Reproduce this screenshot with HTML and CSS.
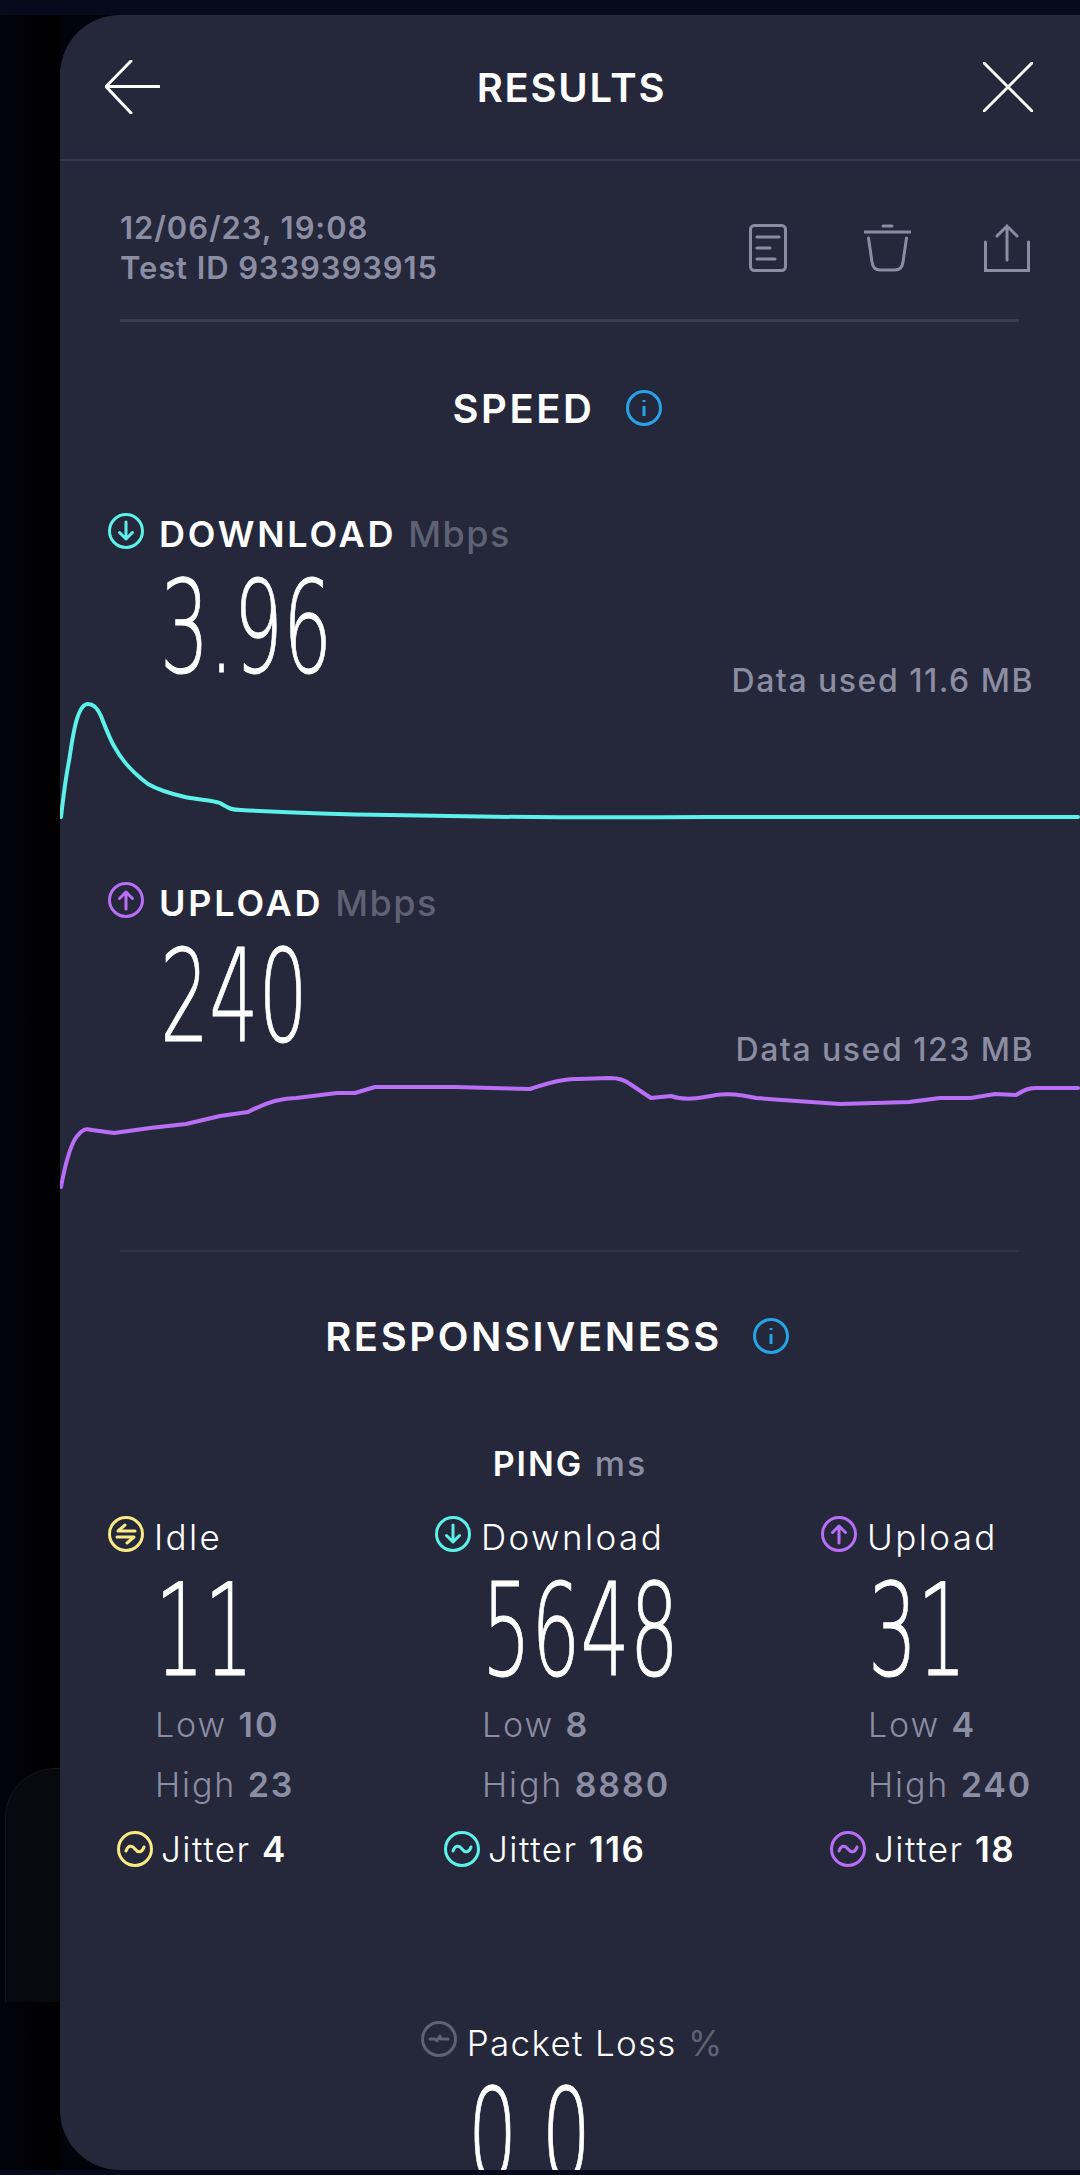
FILE: index.html
```html
<!DOCTYPE html>
<html lang="en">
<head>
    <meta charset="UTF-8">
    <meta name="viewport" content="width=device-width, initial-scale=1.0">
    <title>Results</title>
    <link rel="stylesheet" href="styles.css">
</head>
<body>
    <svg class="defs" width="0" height="0">
        <symbol id="ring-down" viewBox="0 0 36 36"><circle cx="18" cy="18" r="16.5"/><path d="M18 9v17M11.5 19.5 18 26l6.5-6.5"/></symbol>
        <symbol id="ring-up" viewBox="0 0 36 36"><circle cx="18" cy="18" r="16.5"/><path d="M18 27V10M11.5 16.5 18 10l6.5 6.5"/></symbol>
        <symbol id="ring-idle" viewBox="0 0 36 36"><circle cx="18" cy="18" r="16.5"/><path d="M27 15H10l7-6M9 21h17l-7 6"/></symbol>
        <symbol id="ring-jitter" viewBox="0 0 36 36"><circle cx="18" cy="18" r="16.5"/><path d="M9 20c2-6 6-6 9-2s7 4 9-2"/></symbol>
        <symbol id="ring-loss" viewBox="0 0 36 36"><circle cx="18" cy="18" r="16.5"/><path d="M9 18h5l2 2 3-5 1 3M22 18h5"/></symbol>
    </svg>

    <div class="strip"></div>
    <div class="screen">
        <div class="gutter"><div class="ghost-card"></div></div>
        <main class="card">
            <header class="topbar">
                <svg class="icon-back" width="55" height="54" viewBox="0 0 55 54"><path d="M54 26.5H2M26 1 1 26.5 26 53"/></svg>
                <h1 class="page-title">RESULTS</h1>
                <svg class="icon-close" width="50" height="50" viewBox="0 0 50 50"><path d="M1 1l48 48M49 1 1 49"/></svg>
            </header>

            <section class="meta">
                <div class="meta-text">
                    <p>12/06/23, 19:08</p>
                    <p>Test ID 9339393915</p>
                </div>
                <div class="meta-icons">
                    <svg width="38" height="48" viewBox="0 0 38 48"><rect x="1.5" y="1.5" width="35" height="45" rx="4"/><path d="M8 13h22M8 24h13M8 35h18"/></svg>
                    <svg class="icon-trash" width="47" height="48" viewBox="0 0 47 48"><path d="M0 8h47M19 2h9M4.5 14 8 38q1 8 8 8h15q7 0 8-8l3.5-24"/></svg>
                    <svg width="46" height="48" viewBox="0 0 46 48"><path d="M1.5 18v28.5h43V18M23 36V2M13 12 23 2l10 10"/></svg>
                </div>
            </section>
            <hr class="rule">

            <h2 class="section-title speed-title">
                <span>SPEED</span>
                <svg class="info" width="36" height="36" viewBox="0 0 36 36"><circle cx="18" cy="18" r="16.5"/><path d="M18 16v10M18 10v2"/></svg>
            </h2>

            <section class="metric metric-down">
                <div class="metric-head">
                    <svg class="ring teal" width="36" height="36"><use href="#ring-down"/></svg>
                    <p class="metric-name">DOWNLOAD <span class="unit">Mbps</span></p>
                </div>
                <div class="metric-row">
                    <div class="big">3.96</div>
                    <p class="data-used">Data used 11.6 MB</p>
                </div>
                <svg class="chart" width="1020" height="120" viewBox="0 0 1020 120">
                    <path class="line-teal" d="M1 116C4 90 6 75 9 60 12 42 16 3 28 3 34 3 38 8 41 15 46 28 50 38 54 45 60 56 68 68 88 83 100 90 112 93 125 96 140 99 152 99 160 102 170 108 172 109 181 109 220 111 270 113 330 114 420 116 520 117 649 116H1018"/>
                </svg>
            </section>

            <section class="metric metric-up">
                <div class="metric-head">
                    <svg class="ring purple" width="36" height="36"><use href="#ring-up"/></svg>
                    <p class="metric-name">UPLOAD <span class="unit">Mbps</span></p>
                </div>
                <div class="metric-row">
                    <div class="big">240</div>
                    <p class="data-used">Data used 123 MB</p>
                </div>
                <svg class="chart" width="1020" height="120" viewBox="0 0 1020 120">
                    <path class="line-purple" d="M1 117C6 90 12 70 19 64 24 58 28 59 32 60L54 63 90 58 126 54 160 46 188 42C205 33 220 28 236 28L277 23 295 23 315 17 395 17 470 19C490 12 505 8 518 9L550 8Q562 8 570 14L591 28 611 26C625 31 640 28 656 25 670 23 680 25 696 28L722 30 780 34 849 32 880 28 911 28 935 24 956 25C966 19 970 18 976 18L1018 18"/>
                </svg>
            </section>
            <hr class="rule rule-faint">

            <h2 class="section-title">
                <span>RESPONSIVENESS</span>
                <svg class="info" width="36" height="36" viewBox="0 0 36 36"><circle cx="18" cy="18" r="16.5"/><path d="M18 16v10M18 10v2"/></svg>
            </h2>

            <p class="ping-title"><b>PING</b> <span>ms</span></p>

            <div class="ping-grid">
                <div class="ping-col">
                    <div class="ping-head">
                        <svg class="ring yellow" width="36" height="36"><use href="#ring-idle"/></svg>
                        <p class="ping-name">Idle</p>
                    </div>
                    <div class="ping-body">
                        <div class="big">11</div>
                        <p class="range range-low">Low <b>10</b></p>
                        <p class="range">High <b>23</b></p>
                    </div>
                    <div class="jitter">
                        <svg class="ring yellow" width="36" height="36"><use href="#ring-jitter"/></svg>
                        <p>Jitter <b>4</b></p>
                    </div>
                </div>
                <div class="ping-col">
                    <div class="ping-head">
                        <svg class="ring teal" width="36" height="36"><use href="#ring-down"/></svg>
                        <p class="ping-name">Download</p>
                    </div>
                    <div class="ping-body">
                        <div class="big">5648</div>
                        <p class="range range-low">Low <b>8</b></p>
                        <p class="range">High <b>8880</b></p>
                    </div>
                    <div class="jitter">
                        <svg class="ring teal" width="36" height="36"><use href="#ring-jitter"/></svg>
                        <p>Jitter <b>116</b></p>
                    </div>
                </div>
                <div class="ping-col">
                    <div class="ping-head">
                        <svg class="ring purple" width="36" height="36"><use href="#ring-up"/></svg>
                        <p class="ping-name">Upload</p>
                    </div>
                    <div class="ping-body">
                        <div class="big">31</div>
                        <p class="range range-low">Low <b>4</b></p>
                        <p class="range">High <b>240</b></p>
                    </div>
                    <div class="jitter">
                        <svg class="ring purple" width="36" height="36"><use href="#ring-jitter"/></svg>
                        <p>Jitter <b>18</b></p>
                    </div>
                </div>
            </div>

            <div class="packet">
                <div>
                    <div class="ping-head">
                        <svg class="ring grey" width="36" height="36"><use href="#ring-loss"/></svg>
                        <p class="ping-name packet-name">Packet Loss <span class="unit">%</span></p>
                    </div>
                    <div class="ping-body">
                        <div class="big">0.0</div>
                    </div>
                </div>
            </div>
        </main>
    </div>
    <div class="strip strip-bottom"></div>
</body>
</html>
```

FILE: styles.css
```css
* {
    box-sizing: border-box;
}
body {
    margin: 0;
    width: 1080px;
    height: 2175px;
    overflow: hidden;
    background: #02020a;
    color: white;
    font-family: 'Inter', 'Noto Sans', sans-serif;
}
p, h1, h2 {
    margin: 0;
}
svg {
    display: block;
    flex: none;
    fill: none;
    stroke: currentColor;
}
.defs {
    position: absolute;
}
.strip {
    height: 15px;
    background: #070a1c;
}
.strip-bottom {
    height: 5px;
}
.screen {
    display: flex;
    height: 2155px;
}
.gutter {
    width: 60px;
    flex: none;
    background: linear-gradient(90deg, #03030c, #000);
}
.ghost-card {
    margin: 1753px 0 0 5px;
    height: 234px;
    border-radius: 50px 0 0 0;
    background: #08080f;
    border: 1px solid #14141c;
    border-right: none;
    border-bottom: none;
}
.card {
    flex: 1;
    height: 2155px;
    overflow: hidden;
    background: #25273a;
    border-radius: 60px 0 0 60px;
}

/* top bar */
.topbar {
    height: 146px;
    padding: 0 47px 0 45px;
    display: flex;
    align-items: center;
    justify-content: space-between;
    border-bottom: 2px solid #36384d;
}
.page-title {
    font-size: 40px;
    font-weight: 600;
    letter-spacing: 1.8px;
}
.icon-back, .icon-close {
    stroke-width: 3;
    stroke-linecap: round;
    stroke-linejoin: round;
}

/* date and actions */
.meta {
    margin-top: 47px;
    padding: 0 50px 0 60px;
    height: 80px;
    display: flex;
    align-items: center;
    justify-content: space-between;
}
.meta-text {
    color: #8b8da3;
    font-size: 31px;
    font-weight: 600;
    line-height: 40px;
    letter-spacing: 0.9px;
}
.meta-icons {
    display: flex;
    gap: 75px;
    color: #8b8da3;
}
.meta-icons svg {
    stroke-width: 3;
    stroke-linecap: round;
}
.icon-trash {
    margin: 0 -2px 0 2px;
}
.rule {
    margin: 31px 61px 0 60px;
    height: 3px;
    border: none;
    background: #3a3c50;
}
.rule-faint {
    margin-top: 60px;
    height: 2px;
    background: #313346;
}

/* section headings */
.section-title {
    margin-top: 59px;
    padding-right: 26px;
    height: 50px;
    display: flex;
    align-items: center;
    justify-content: center;
    gap: 31px;
    font-size: 40px;
    font-weight: 600;
    letter-spacing: 2.6px;
}
.speed-title {
    margin-top: 61px;
}
.info {
    color: #27a4e8;
    stroke-width: 3;
}

/* speed blocks */
.metric {
    padding-top: 80px;
}
.metric-up {
    padding-top: 61px;
}
.metric-head {
    height: 43px;
    padding-left: 48px;
    display: flex;
    gap: 15px;
}
.ring {
    stroke-width: 3;
    stroke-linecap: round;
    stroke-linejoin: round;
}
.teal { color: #5cf2ea; }
.purple { color: #b96ff5; }
.yellow { color: #fbe983; }
.grey { color: #5f6175; }
.metric-name {
    padding-top: 1px;
    font-size: 36px;
    font-weight: 600;
    line-height: 40px;
    letter-spacing: 2.8px;
}
.unit {
    color: #5f6175;
    font-weight: 500;
    letter-spacing: 1.5px;
}
.metric-row {
    margin-top: 21px;
    padding: 0 46px 0 100px;
    height: 124px;
    display: flex;
    justify-content: space-between;
}
.big {
    height: 100px;
    font-family: 'DejaVu Sans', sans-serif;
    font-weight: 200;
    font-size: 129px;
    line-height: 100px;
    white-space: nowrap;
    -webkit-text-stroke: 1px white;
    transform: scaleX(0.6);
    transform-origin: left top;
}
.data-used {
    margin-top: 84px;
    color: #8b8da3;
    font-size: 32px;
    font-weight: 500;
    line-height: 40px;
    letter-spacing: 1.5px;
    white-space: nowrap;
}
.chart {
    stroke-width: 4;
    stroke-linejoin: round;
    stroke-linecap: round;
}
.line-teal { stroke: #5cf2ea; }
.line-purple { stroke: #b96ff5; }

/* ping */
.ping-title {
    margin-top: 83px;
    text-align: center;
    font-size: 34px;
    line-height: 40px;
    letter-spacing: 2px;
}
.ping-title b {
    font-weight: 600;
}
.ping-title span {
    color: #8b8da3;
    font-weight: 500;
}
.ping-grid {
    margin-top: 32px;
    padding-left: 48px;
    display: grid;
    grid-template-columns: 327px 386px auto;
}
.ping-head {
    height: 43px;
    display: flex;
    gap: 10px;
}
.ping-name {
    padding-top: 1px;
    font-size: 35px;
    font-weight: 300;
    line-height: 40px;
    letter-spacing: 2.4px;
}
.packet-name {
    padding-top: 2px;
    letter-spacing: 1.3px;
}
.packet-name .unit {
    font-weight: 400;
    letter-spacing: 0;
}
.ping-body {
    margin-top: 21px;
    padding-left: 47px;
}
.range {
    color: #8b8da3;
    font-size: 34px;
    font-weight: 300;
    line-height: 60px;
    letter-spacing: 1.9px;
}
.range b {
    font-weight: 600;
}
.range-low {
    margin-top: 15px;
}
.jitter {
    margin: 16px 0 0 9px;
    display: flex;
    gap: 8px;
    font-size: 35px;
    font-weight: 300;
    line-height: 36px;
    letter-spacing: 1.5px;
}
.jitter b {
    font-weight: 600;
}

/* packet loss */
.packet {
    margin-top: 154px;
    padding-left: 3px;
    display: flex;
    justify-content: center;
}
```
